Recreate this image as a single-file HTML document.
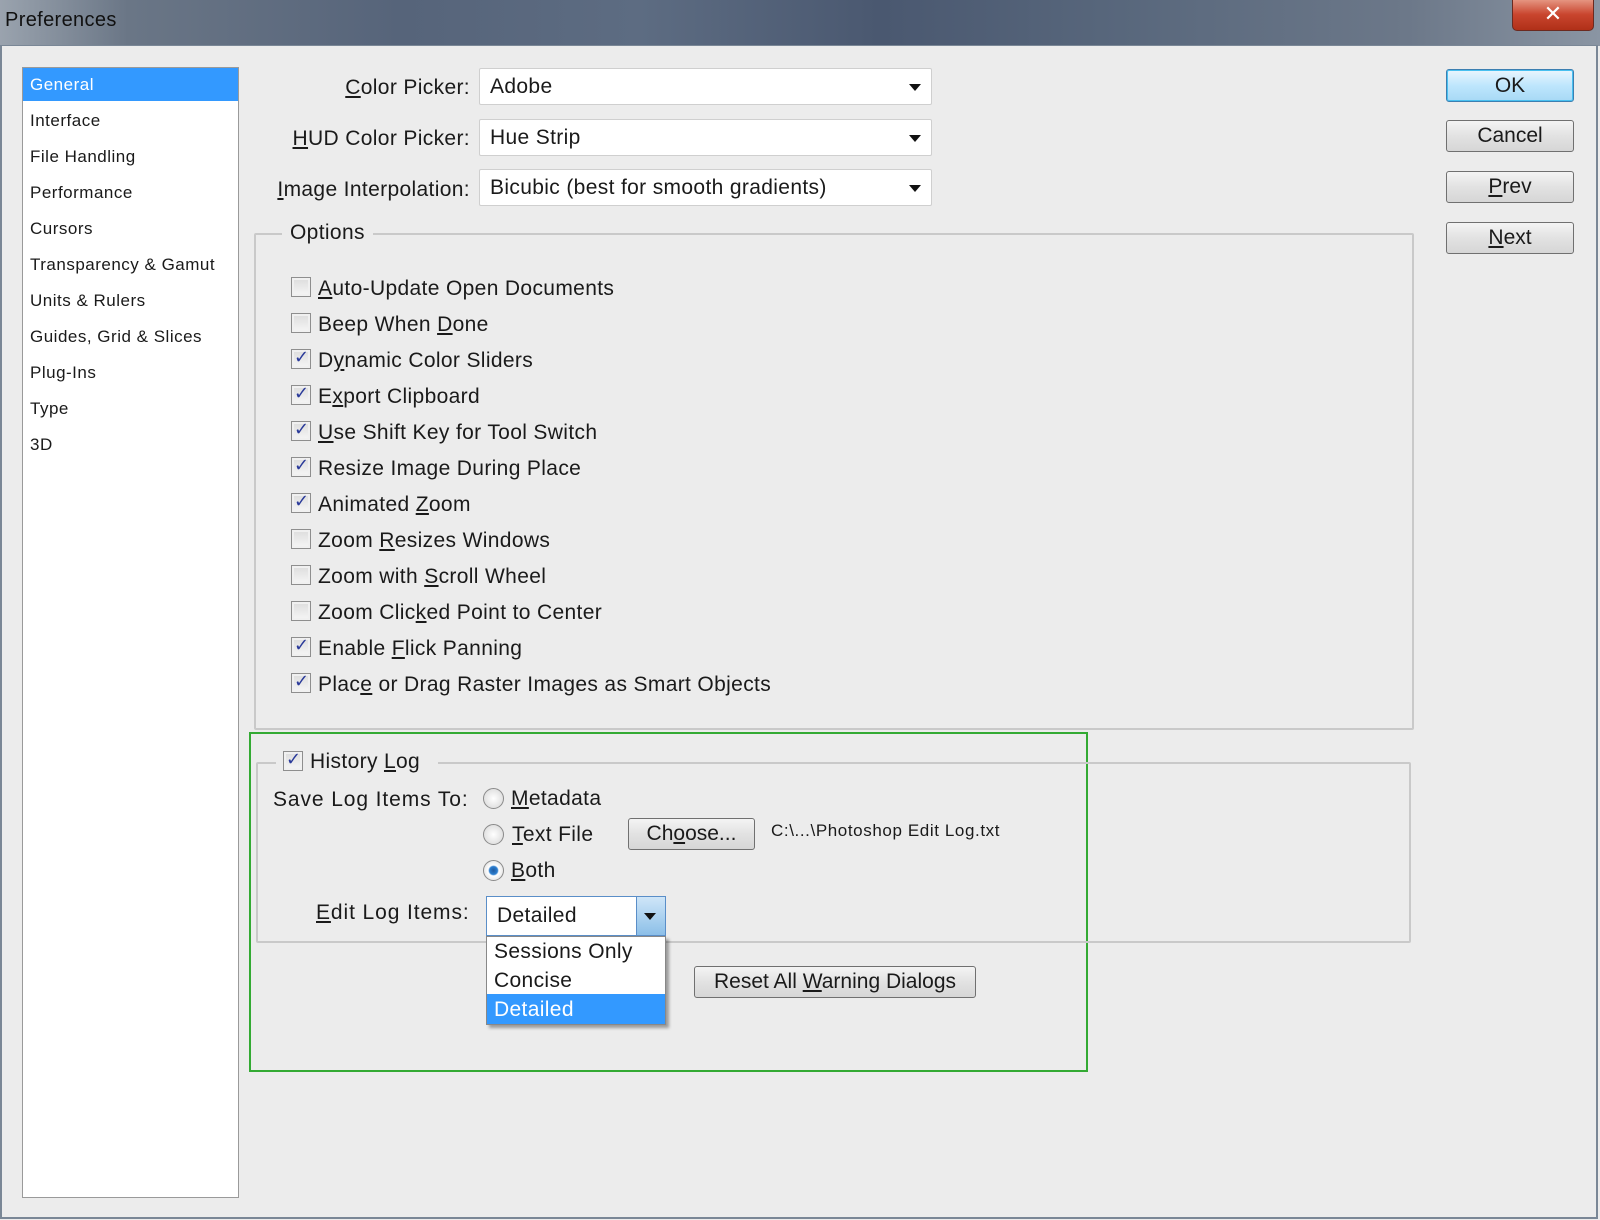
<!DOCTYPE html>
<html><head><meta charset="utf-8"><style>
*{box-sizing:border-box;margin:0;padding:0}
body{width:1600px;height:1220px;overflow:hidden;background:#ececec;font-family:"Liberation Sans","DejaVu Sans",sans-serif;color:#1a1a1a;position:relative}
.a{position:absolute}
.title{left:0;top:0;width:1600px;height:46px;background:linear-gradient(90deg,#9aa3ae 0%,#6a7686 8%,#56647a 25%,#5d6c82 40%,#4a5870 55%,#58677c 70%,#6c7889 88%,#8a95a3 100%)}
.t{font-size:20px;white-space:nowrap;letter-spacing:0.35px}
.list{left:22px;top:67px;width:217px;height:1131px;background:#fff;border:1px solid #9a9a9a}
.li{position:absolute;left:7px;font-size:17px;white-space:nowrap;letter-spacing:0.5px}
.sel{background:#fff;border:1px solid #cfcfcf;border-radius:2px;font-size:21px;padding:6px 10px;white-space:nowrap;letter-spacing:0.35px}
.arr{position:absolute;right:10px;top:15px;width:0;height:0;border-left:6px solid transparent;border-right:6px solid transparent;border-top:7px solid #111}
.fs{border:2px solid #c9c9c9;border-radius:2px}
.cb{width:20px;height:20px;border:1px solid #8e8e8e;background:linear-gradient(#dcdcdc,#f6f6f6);box-shadow:inset 0 0 0 2px #f0f0f0}
.ck::after{content:"✓";position:absolute;left:2px;top:-3px;font-size:18px;color:#2a3a9a;font-weight:bold}
.btn{border:1px solid #707070;border-radius:3px;background:linear-gradient(#f4f4f4,#e2e2e2 50%,#d6d6d6);font-size:21px;text-align:center;white-space:nowrap}
.rad{width:21px;height:21px;border-radius:50%;border:1px solid #8a8a8a;background:radial-gradient(#fff,#d5d5d5)}
u{text-decoration:underline}
</style></head><body>
<div class="a title"></div>
<div class="a t" style="left:5px;top:9px;color:#111;font-size:20px">Preferences</div>
<div class="a" style="left:1512px;top:-2px;width:82px;height:33px;border:1px solid #6b2a20;border-radius:0 0 5px 5px;background:linear-gradient(#e79a86,#c9452e 50%,#b03018);color:#fff;font-size:22px;font-weight:bold;text-align:center;line-height:30px">✕</div>
<div class="a" style="left:0;top:45px;width:1598px;height:1174px;border:2px solid #7a8796;border-top:1px solid #7a8796;background:#ececec"></div>

<div class="a list">
<div class="a" style="left:0;top:0;width:215px;height:33px;background:#3399ff"></div>
<div class="li" style="top:7px;color:#fff">General</div>
<div class="li" style="top:43px">Interface</div>
<div class="li" style="top:79px">File Handling</div>
<div class="li" style="top:115px">Performance</div>
<div class="li" style="top:151px">Cursors</div>
<div class="li" style="top:187px">Transparency &amp; Gamut</div>
<div class="li" style="top:223px">Units &amp; Rulers</div>
<div class="li" style="top:259px">Guides, Grid &amp; Slices</div>
<div class="li" style="top:295px">Plug-Ins</div>
<div class="li" style="top:331px">Type</div>
<div class="li" style="top:367px">3D</div>
</div>

<div class="a t" style="right:1130px;top:76px;font-size:21px"><u>C</u>olor Picker:</div>
<div class="a sel" style="left:479px;top:68px;width:453px;height:37px">Adobe<span class="arr"></span></div>
<div class="a t" style="right:1130px;top:127px;font-size:21px"><u>H</u>UD Color Picker:</div>
<div class="a sel" style="left:479px;top:119px;width:453px;height:37px">Hue Strip<span class="arr"></span></div>
<div class="a t" style="right:1130px;top:178px;font-size:21px"><u>I</u>mage Interpolation:</div>
<div class="a sel" style="left:479px;top:169px;width:453px;height:37px">Bicubic (best for smooth gradients)<span class="arr"></span></div>

<div class="a fs" style="left:254px;top:233px;width:1160px;height:497px"></div>
<div class="a t" style="left:282px;top:221px;background:#ececec;padding:0 8px;font-size:21px">Options</div>

<div class="a cb" style="left:291px;top:277px"></div><div class="a t" style="left:318px;top:277px;font-size:21px"><u>A</u>uto-Update Open Documents</div>
<div class="a cb" style="left:291px;top:313px"></div><div class="a t" style="left:318px;top:313px;font-size:21px">Beep When <u>D</u>one</div>
<div class="a cb ck" style="left:291px;top:349px"></div><div class="a t" style="left:318px;top:349px;font-size:21px">D<u>y</u>namic Color Sliders</div>
<div class="a cb ck" style="left:291px;top:385px"></div><div class="a t" style="left:318px;top:385px;font-size:21px">E<u>x</u>port Clipboard</div>
<div class="a cb ck" style="left:291px;top:421px"></div><div class="a t" style="left:318px;top:421px;font-size:21px"><u>U</u>se Shift Key for Tool Switch</div>
<div class="a cb ck" style="left:291px;top:457px"></div><div class="a t" style="left:318px;top:457px;font-size:21px">Resize Ima<u>g</u>e During Place</div>
<div class="a cb ck" style="left:291px;top:493px"></div><div class="a t" style="left:318px;top:493px;font-size:21px">Animated <u>Z</u>oom</div>
<div class="a cb" style="left:291px;top:529px"></div><div class="a t" style="left:318px;top:529px;font-size:21px">Zoom <u>R</u>esizes Windows</div>
<div class="a cb" style="left:291px;top:565px"></div><div class="a t" style="left:318px;top:565px;font-size:21px">Zoom with <u>S</u>croll Wheel</div>
<div class="a cb" style="left:291px;top:601px"></div><div class="a t" style="left:318px;top:601px;font-size:21px">Zoom Clic<u>k</u>ed Point to Center</div>
<div class="a cb ck" style="left:291px;top:637px"></div><div class="a t" style="left:318px;top:637px;font-size:21px">Enable <u>F</u>lick Panning</div>
<div class="a cb ck" style="left:291px;top:673px"></div><div class="a t" style="left:318px;top:673px;font-size:21px">Plac<u>e</u> or Drag Raster Images as Smart Objects</div>

<div class="a" style="left:249px;top:732px;width:839px;height:340px;border:2px solid #33aa33"></div>
<div class="a fs" style="left:256px;top:762px;width:1155px;height:181px"></div>
<div class="a" style="left:276px;top:748px;width:162px;height:30px;background:#ececec"></div>
<div class="a cb ck" style="left:283px;top:751px"></div><div class="a t" style="left:310px;top:750px;font-size:21px">History <u>L</u>og</div>

<div class="a t" style="left:273px;top:788px;font-size:21px;letter-spacing:0.9px">Save Log Items To:</div>
<div class="a rad" style="left:483px;top:788px"></div><div class="a t" style="left:511px;top:787px;font-size:21px"><u>M</u>etadata</div>
<div class="a rad" style="left:483px;top:824px"></div><div class="a t" style="left:512px;top:823px;font-size:21px"><u>T</u>ext File</div>
<div class="a btn" style="left:628px;top:818px;width:127px;height:32px;line-height:30px">Ch<u>o</u>ose...</div>
<div class="a t" style="left:771px;top:821px;font-size:17px;letter-spacing:0.6px">C:\...\Photoshop Edit Log.txt</div>
<div class="a rad" style="left:483px;top:860px;background:radial-gradient(#1e5aa0 0,#2d7fd0 30%,#fff 40%,#d5d5d5)"></div><div class="a t" style="left:511px;top:859px;font-size:21px"><u>B</u>oth</div>

<div class="a t" style="left:316px;top:901px;font-size:21px;letter-spacing:0.9px"><u>E</u>dit Log Items:</div>
<div class="a" style="left:486px;top:896px;width:180px;height:40px;background:#fff;border:1px solid #5a8ec8"></div>
<div class="a t" style="left:497px;top:904px;font-size:21px">Detailed</div>
<div class="a" style="left:636px;top:897px;width:29px;height:38px;background:linear-gradient(#cfe6f8,#8cbfe8);border-left:1px solid #5a8ec8"></div>
<div class="a" style="left:644px;top:913px;width:0;height:0;border-left:6px solid transparent;border-right:6px solid transparent;border-top:7px solid #111"></div>

<div class="a" style="left:486px;top:936px;width:180px;height:89px;background:#fff;border:1px solid #888;box-shadow:3px 3px 3px rgba(0,0,0,0.35)"></div>
<div class="a t" style="left:494px;top:940px;font-size:21px">Sessions Only</div>
<div class="a t" style="left:494px;top:969px;font-size:21px">Concise</div>
<div class="a" style="left:487px;top:994px;width:178px;height:30px;background:#3399ff"></div>
<div class="a t" style="left:494px;top:998px;font-size:21px;color:#fff">Detailed</div>

<div class="a btn" style="left:694px;top:966px;width:282px;height:32px;line-height:30px">Reset All <u>W</u>arning Dialogs</div>

<div class="a btn" style="left:1446px;top:69px;width:128px;height:33px;line-height:31px;border-color:#3c7fb1;background:linear-gradient(#eaf6fd,#bee6fd 50%,#a7d9f5);box-shadow:0 0 0 1px #48c0f0 inset">OK</div>
<div class="a btn" style="left:1446px;top:120px;width:128px;height:32px;line-height:30px">Cancel</div>
<div class="a btn" style="left:1446px;top:171px;width:128px;height:32px;line-height:30px"><u>P</u>rev</div>
<div class="a btn" style="left:1446px;top:222px;width:128px;height:32px;line-height:30px"><u>N</u>ext</div>
</body></html>
